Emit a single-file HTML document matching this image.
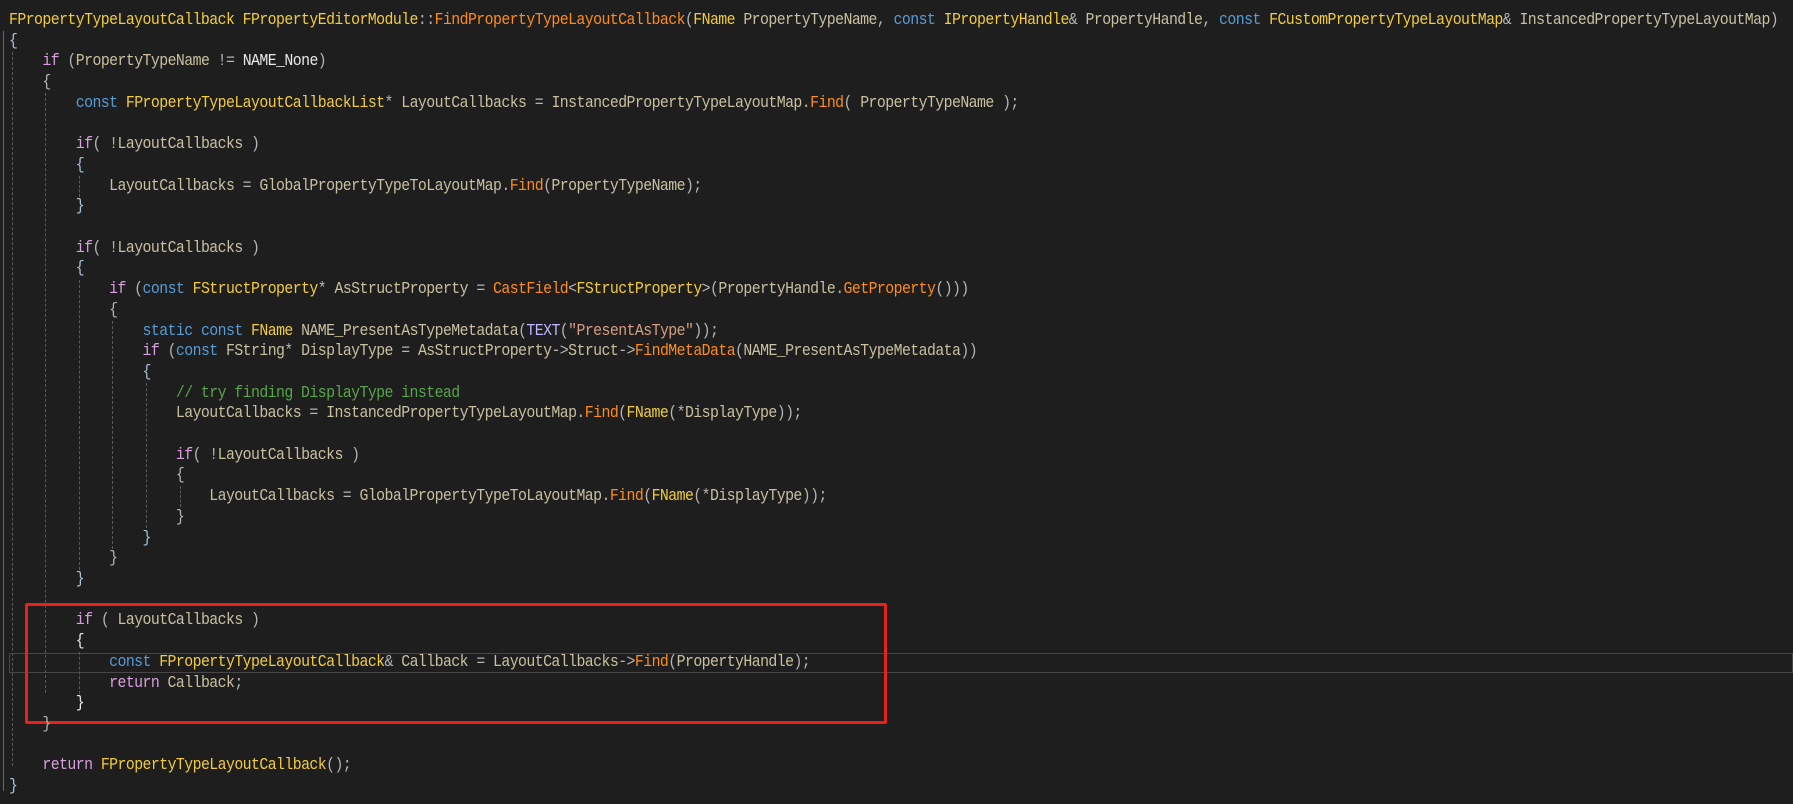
<!DOCTYPE html>
<html><head><meta charset="utf-8"><style>
html,body{margin:0;padding:0;background:#1e1e1e;width:1793px;height:804px;overflow:hidden;position:relative}
pre{position:absolute;left:9px;top:10px;margin:0;font-family:"Liberation Mono","DejaVu Sans Mono",monospace;font-size:16.5px;letter-spacing:-0.63px;line-height:20.7px;color:#c8c0a0;white-space:pre;transform:scaleX(0.9);transform-origin:0 0}
.k{color:#569cd6}.c{color:#d8a0df}.t{color:#f2cc3c}.f{color:#ff8c1a}.p{color:#b4b4b4}.m{color:#beb7ff}.s{color:#d69d85}.g{color:#57a64a}.b{color:#a8c0d8}.w{color:#e8e8e8}
.gd{position:absolute;width:0;border-left:1px dashed #5a5a5a}
.ol{position:absolute;left:3px;width:0;border-left:1px solid #6a6a6a}
</style></head><body>
<div style="position:absolute;left:9px;top:653px;width:1784px;height:20px;border:1px solid #464646;box-sizing:border-box"></div>
<div class="ol" style="top:31px;height:760px"></div>
<div class="gd" style="left:12px;top:52px;height:714px"></div>
<div class="gd" style="left:45px;top:93px;height:600px"></div>
<div class="gd" style="left:79px;top:176px;height:21px"></div>
<div class="gd" style="left:79px;top:280px;height:290px"></div>
<div class="gd" style="left:79px;top:652px;height:42px"></div>
<div class="gd" style="left:112px;top:321px;height:228px"></div>
<div class="gd" style="left:146px;top:383px;height:145px"></div>
<div class="gd" style="left:180px;top:486px;height:21px"></div>
<div style="position:absolute;left:25px;top:603px;width:862px;height:121px;border:3px solid #e8201e;box-sizing:border-box;border-radius:2px"></div>
<pre><span class="t">FPropertyTypeLayoutCallback FPropertyEditorModule</span><span class="p">::</span><span class="f">FindPropertyTypeLayoutCallback</span><span class="p">(</span><span class="t">FName</span> PropertyTypeName<span class="p">,</span> <span class="k">const</span> <span class="t">IPropertyHandle</span><span class="p">&amp;</span> PropertyHandle<span class="p">,</span> <span class="k">const</span> <span class="t">FCustomPropertyTypeLayoutMap</span><span class="p">&amp;</span> InstancedPropertyTypeLayoutMap<span class="p">)</span>
<span class="b">{</span>
    <span class="c">if</span> <span class="p">(</span>PropertyTypeName <span class="p">!=</span> <span class="w">NAME_None</span><span class="p">)</span>
    <span class="p">{</span>
        <span class="k">const</span> <span class="t">FPropertyTypeLayoutCallbackList</span><span class="p">*</span> LayoutCallbacks <span class="p">=</span> InstancedPropertyTypeLayoutMap<span class="p">.</span><span class="f">Find</span><span class="p">(</span> PropertyTypeName <span class="p">);</span>

        <span class="c">if</span><span class="p">(</span> <span class="p">!</span>LayoutCallbacks <span class="p">)</span>
        <span class="b">{</span>
            LayoutCallbacks <span class="p">=</span> GlobalPropertyTypeToLayoutMap<span class="p">.</span><span class="f">Find</span><span class="p">(</span>PropertyTypeName<span class="p">);</span>
        <span class="b">}</span>

        <span class="c">if</span><span class="p">(</span> <span class="p">!</span>LayoutCallbacks <span class="p">)</span>
        <span class="b">{</span>
            <span class="c">if</span> <span class="p">(</span><span class="k">const</span> <span class="t">FStructProperty</span><span class="p">*</span> AsStructProperty <span class="p">=</span> <span class="f">CastField</span><span class="p">&lt;</span><span class="t">FStructProperty</span><span class="p">&gt;(</span>PropertyHandle<span class="p">.</span><span class="f">GetProperty</span><span class="p">()))</span>
            <span class="p">{</span>
                <span class="k">static</span> <span class="k">const</span> <span class="t">FName</span> NAME_PresentAsTypeMetadata<span class="p">(</span><span class="m">TEXT</span><span class="p">(</span><span class="s">"PresentAsType"</span><span class="p">));</span>
                <span class="c">if</span> <span class="p">(</span><span class="k">const</span> FString<span class="p">*</span> DisplayType <span class="p">=</span> AsStructProperty<span class="p">-&gt;</span>Struct<span class="p">-&gt;</span><span class="f">FindMetaData</span><span class="p">(</span>NAME_PresentAsTypeMetadata<span class="p">))</span>
                <span class="b">{</span>
                    <span class="g">// try finding DisplayType instead</span>
                    LayoutCallbacks <span class="p">=</span> InstancedPropertyTypeLayoutMap<span class="p">.</span><span class="f">Find</span><span class="p">(</span><span class="t">FName</span><span class="p">(*</span>DisplayType<span class="p">));</span>

                    <span class="c">if</span><span class="p">(</span> <span class="p">!</span>LayoutCallbacks <span class="p">)</span>
                    <span class="p">{</span>
                        LayoutCallbacks <span class="p">=</span> GlobalPropertyTypeToLayoutMap<span class="p">.</span><span class="f">Find</span><span class="p">(</span><span class="t">FName</span><span class="p">(*</span>DisplayType<span class="p">));</span>
                    <span class="p">}</span>
                <span class="b">}</span>
            <span class="p">}</span>
        <span class="b">}</span>

        <span class="c">if</span> <span class="p">(</span> LayoutCallbacks <span class="p">)</span>
        <span class="w">{</span>
            <span class="k">const</span> <span class="t">FPropertyTypeLayoutCallback</span><span class="p">&amp;</span> Callback <span class="p">=</span> LayoutCallbacks<span class="p">-&gt;</span><span class="f">Find</span><span class="p">(</span>PropertyHandle<span class="p">);</span>
            <span class="c">return</span> Callback<span class="p">;</span>
        <span class="w">}</span>
    <span class="p">}</span>

    <span class="c">return</span> <span class="t">FPropertyTypeLayoutCallback</span><span class="p">();</span>
<span class="b">}</span></pre>
</body></html>
